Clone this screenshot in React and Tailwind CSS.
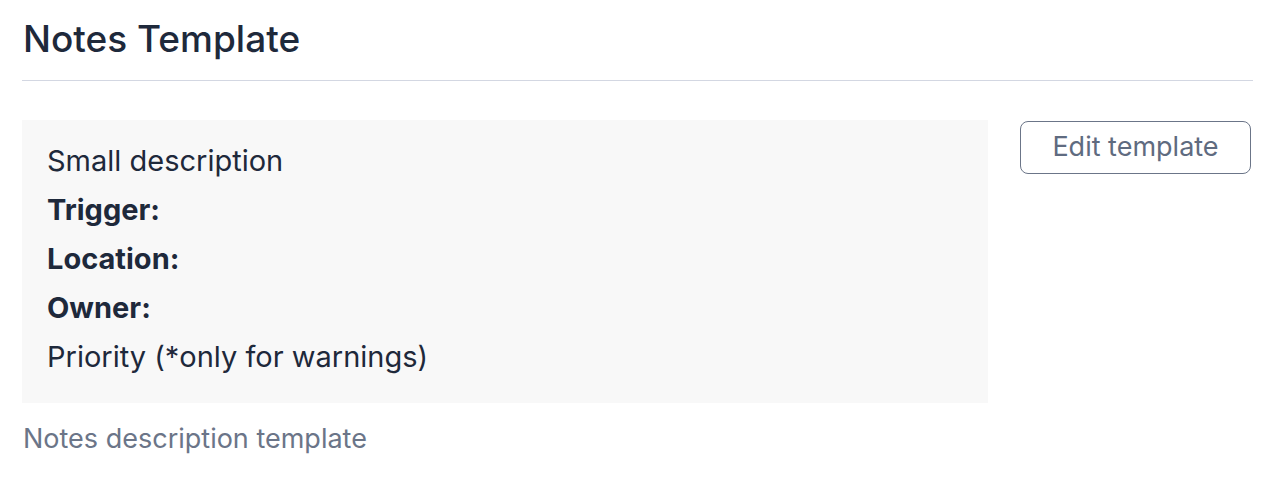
import React from "react";

export default function App() {
  return (
    <div className="min-h-screen bg-white font-['Inter',sans-serif] text-[#1e293b]">
      <main className="pl-[22px] pr-[27px] pt-[16px]">
        {/* Header */}
        <header className="border-b border-[#d3d7e2] pb-[19px]">
          <h1 className="text-[37px] leading-[45px] font-medium pl-px">Notes Template</h1>
        </header>

        {/* Template body */}
        <section className="mt-[39px] flex items-start justify-between">
          <div className="w-[966px] bg-[#f8f8f8] px-[25px] pt-[16px] pb-[22px] text-[29px] leading-[49px]">
            <p>Small description</p>
            <p className="font-bold">Trigger:</p>
            <p className="font-bold">Location:</p>
            <p className="font-bold">Owner:</p>
            <p>Priority (*only for warnings)</p>
          </div>
          <button className="mt-px mr-[2px] h-[53px] w-[231px] rounded-[8px] border-[1.5px] border-[#6b7588] text-[27px] text-[#5f6b80]">
            Edit template
          </button>
        </section>

        <p className="mt-[16px] pl-px text-[27px] leading-[40px] text-[#6b7588]">Notes description template</p>
      </main>
    </div>
  );
}
